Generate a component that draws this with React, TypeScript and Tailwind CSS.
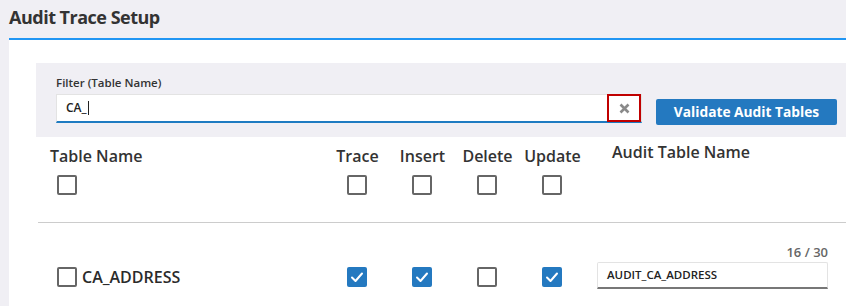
import React from 'react';

const font = { fontFamily: '"Open Sans", "Liberation Sans", sans-serif' };

function Box({ checked = false }: { checked?: boolean }) {
  if (checked) {
    return (
      <span className="flex h-[20px] w-[20px] items-center justify-center rounded-[2px] bg-[#2479c0]">
        <svg width="14" height="14" viewBox="0 0 14 14" fill="none">
          <polyline points="2,7.5 5.5,11 12,3.5" stroke="white" strokeWidth="2" strokeLinecap="round" strokeLinejoin="round" />
        </svg>
      </span>
    );
  }
  return <span className="block h-[20px] w-[20px] rounded-[2px] border-2 border-[#666] bg-white" />;
}

const flagCols = ['Trace', 'Insert', 'Delete', 'Update'];
const rowFlags = [true, true, false, true];

export default function App() {
  return (
    <div className="min-h-[306px] bg-[#f0eff4] text-[#333]" style={font}>
      <div className="h-[38px] pl-[9px] pt-[5px] text-[18px] font-bold leading-[24px] tracking-[-0.5px] text-[#333]">
        Audit Trace Setup
      </div>
      <div className="ml-[9px] min-h-[268px] border-t-2 border-[#2196f3] bg-white pl-[27px] pt-[23px]">
        {/* filter panel */}
        <div className="flex h-[74px] items-end bg-[#f0eff4] pb-[14px] pl-[20px]">
          <div>
            <div className="mb-[4px] text-[11.5px] font-semibold leading-[15px] text-[#333]">Filter (Table Name)</div>
            <div className="flex h-[29px] w-[586px] items-start border border-b-2 border-[#e3e3e3] border-b-[#1e7bc1] bg-white">
              <div className="flex h-full flex-1 items-center pl-[9px] text-[12px] font-semibold text-[#222]">
                CA_<span className="ml-[1px] inline-block h-[14px] w-[1px] bg-[#222]" />
              </div>
              <button className="-mt-[1px] flex h-[28px] w-[34px] items-center justify-center border-2 border-[#c00000] bg-white">
                <svg width="11" height="11" viewBox="0 0 11 11">
                  <path d="M1.5 1.5 L9.5 9.5 M9.5 1.5 L1.5 9.5" stroke="#8a8a8a" strokeWidth="2.6" />
                </svg>
              </button>
            </div>
          </div>
          <button className="mb-[-2px] ml-[14px] h-[26px] w-[181px] rounded-[2px] bg-[#2479c0] text-[13.75px] font-bold text-white">
            Validate Audit Tables
          </button>
        </div>

        {/* table */}
        <div className="ml-[2px] mt-[8px]">
          <div className="flex items-start">
            <div className="w-[287px]">
              <div className="pl-[12px] text-[16px] font-semibold leading-[22px]">Table Name</div>
              <div className="mt-[8px] pl-[19px]">
                <Box />
              </div>
            </div>
            {flagCols.map((c) => (
              <div key={c} className="flex w-[65px] flex-col items-center">
                <div className="text-[16px] font-semibold leading-[22px]">{c}</div>
                <div className="mr-[2px] mt-[8px]">
                  <Box />
                </div>
              </div>
            ))}
            <div className="-mt-[4px] pl-[27px] text-[16px] font-semibold leading-[22px]">Audit Table Name</div>
          </div>
          <div className="mt-[27px] border-t border-[#cccccc]" />

          <div className="flex items-end pt-[21px]">
            <div className="mb-[2px] flex w-[287px] items-center gap-[5px] pl-[19px]">
              <Box />
              <span className="text-[16px] font-semibold leading-[20px] text-[#2b2b2b]">CA_ADDRESS</span>
            </div>
            {rowFlags.map((f, i) => (
              <div key={i} className="mb-[2px] flex w-[65px] justify-center">
                <div className="mr-[2px]">
                  <Box checked={f} />
                </div>
              </div>
            ))}
            <div className="w-[243px] pl-[12px]">
              <div className="mb-[2px] text-right text-[13px] font-semibold leading-[16px] text-[#666]">16 / 30</div>
              <div className="flex h-[27px] items-center rounded-t-[2px] border border-b-2 border-[#e3e3e3] border-b-[#777] pl-[9px] text-[11.5px] font-semibold text-[#222]">
                AUDIT_CA_ADDRESS
              </div>
            </div>
          </div>
        </div>
      </div>
    </div>
  );
}
